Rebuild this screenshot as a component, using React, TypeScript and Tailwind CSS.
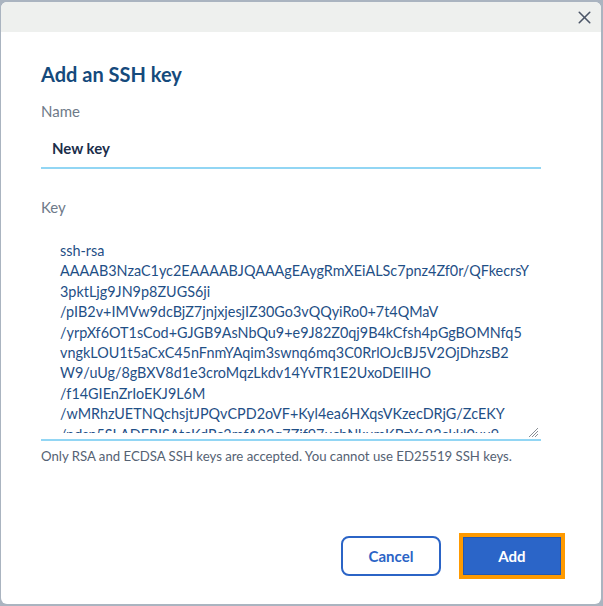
import React from 'react';
import { X } from 'lucide-react';

const keyValue = [
  'ssh-rsa',
  'AAAAB3NzaC1yc2EAAAABJQAAAgEAygRmXEiALSc7pnz4Zf0r/QFkecrsY',
  '3pktLjg9JN9p8ZUGS6ji',
  '/pIB2v+IMVw9dcBjZ7jnjxjesjIZ30Go3vQQyiRo0+7t4QMaV',
  '/yrpXf6OT1sCod+GJGB9AsNbQu9+e9J82Z0qj9B4kCfsh4pGgBOMNfq5',
  'vngkLOU1t5aCxC45nFnmYAqim3swnq6mq3C0RrlOJcBJ5V2OjDhzsB2',
  'W9/uUg/8gBXV8d1e3croMqzLkdv14YvTR1E2UxoDElIHO',
  '/f14GIEnZrIoEKJ9L6M',
  '/wMRhzUETNQchsjtJPQvCPD2oVF+Kyl4ea6HXqsVKzecDRjG/ZcEKY',
  '/ndsn5SLADERISAtcKdRc3mfA93q7Zif97ucbNkumKBzYo83ckkl0uu9',
  'xT4cPLtx0mn1Fz',
].join('\n');

const App: React.FC = () => {
  return (
    <div
      className="w-[603px] h-[606px] bg-[#aab4c0] pt-[2px] pl-[1px] overflow-hidden"
      style={{ fontFamily: 'Lato, "Noto Sans", sans-serif' }}
    >
      <div className="w-[600px] h-[602px] bg-white rounded-md overflow-hidden flex flex-col">
        <div className="h-[30px] bg-[#eef0ee] flex items-center justify-end pr-[6px]">
          <button className="text-[#4b5567]" title="Close">
            <X size={21} strokeWidth={1.8} />
          </button>
        </div>

        <div className="flex-1 flex flex-col px-[40px] pt-[28px] pb-[28px]">
          <h2 className="text-[20px] leading-[28px] font-bold text-[#154a7c]">Add an SSH key</h2>

          <label className="mt-[13px] text-[15px] leading-[20px] text-[#6e7a89]">Name</label>
          <input
            className="mt-[7px] h-[41px] w-[500px] px-[11px] text-[15px] font-bold text-[#1b2e4b] border-b-2 border-[#92d6f4] outline-none"
            defaultValue="New key"
          />

          <label className="mt-[28px] text-[15px] leading-[20px] text-[#6e7a89]">Key</label>
          <div className="relative mt-[15px] w-[500px] pb-[6px] border-b-2 border-[#92d6f4]">
            <textarea
              className="block h-[201px] w-full pl-[19px] pr-[8px] pt-[9px] text-[14.4px] leading-[20.4px] text-[#1f4f86] whitespace-pre overflow-hidden outline-none resize-none"
              defaultValue={keyValue}
              spellCheck={false}
            />
            <svg className="absolute right-[2px] bottom-[1px]" width="12" height="12" viewBox="0 0 12 12">
              <path d="M11 2L2 11M11 5L5 11M11 8L8 11" stroke="#8a8f96" strokeWidth="1" />
            </svg>
          </div>
          <p className="mt-[7px] text-[13.2px] leading-[16px] text-[#556273]">
            Only RSA and ECDSA SSH keys are accepted. You cannot use ED25519 SSH keys.
          </p>

          <div className="mt-auto flex justify-end items-center gap-[22px]">
            <button className="w-[100px] h-[40px] rounded-lg border-2 border-[#2b64c6] text-[#2b64c6] text-[15px] font-bold">
              Cancel
            </button>
            <button className="w-[98px] h-[38px] bg-[#2b65c8] border border-[#2358b0] text-white text-[15px] font-bold outline-4 outline-[#ff9a00]">
              Add
            </button>
          </div>
        </div>
      </div>
    </div>
  );
};

export default App;
